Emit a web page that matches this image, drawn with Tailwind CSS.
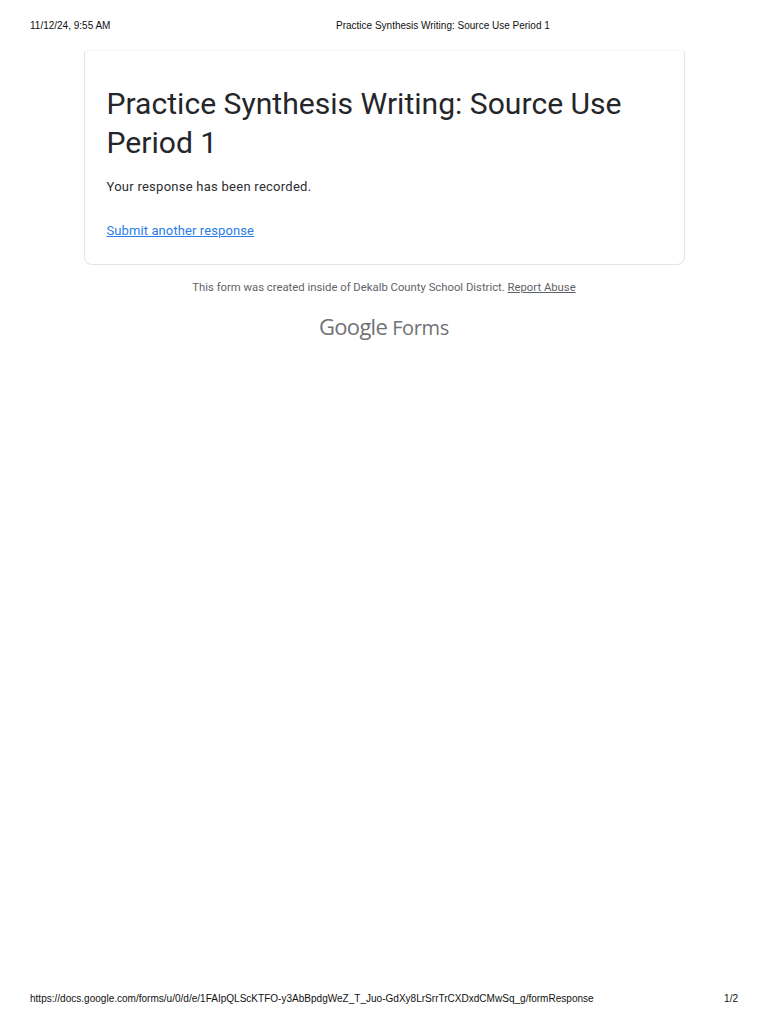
<!DOCTYPE html>
<html lang="en">
<head>
    <meta charset="UTF-8">
    <meta name="viewport" content="width=device-width, initial-scale=1.0">
    <title>Practice Synthesis Writing: Source Use Period 1</title>
    <script src="https://cdn.jsdelivr.net/npm/@tailwindcss/browser@4"></script>
</head>
<body class="bg-white h-[1024px] overflow-hidden flex flex-col font-['Roboto',sans-serif]">
    <header class="flex items-center h-[50px] pl-[30px] pr-[30px] pt-[1px] text-[10px] text-[#111] font-['Liberation_Sans',sans-serif]">
        <span class="w-[306px]">11/12/24, 9:55 AM</span>
        <span>Practice Synthesis Writing: Source Use Period 1</span>
    </header>
    <main class="flex-1 flex flex-col items-center">
        <section class="w-[601px] h-[215px] bg-white border border-t-[#f6f6f6] border-[#e2e4e6] rounded-b-lg rounded-t-sm pl-[22px] pr-6 pt-[33px]">
            <h1 class="text-[30.1px] leading-[39px] text-[#25262a]">Practice Synthesis Writing: Source Use Period 1</h1>
            <p class="mt-[15px] text-[13px] leading-[20px] tracking-[0.26px] text-[#2c2d30]">Your response has been recorded.</p>
            <a href="#" class="block mt-[24px] text-[13px] leading-[20px] tracking-[0.1px] text-[#2a7de8] underline">Submit another response</a>
        </section>
        <p class="mt-[15.5px] text-[11.3px] leading-[14px] text-[#5f6368]">This form was created inside of Dekalb County School District. <a href="#" class="underline text-[#5f6368]">Report Abuse</a></p>
        <div class="mt-[18.5px] flex items-baseline gap-[5px] text-[#707276] font-['Open_Sans',sans-serif]">
            <span class="text-[22px] leading-[26px] font-medium tracking-[-0.7px]">Google</span>
            <span class="text-[20px] leading-[26px] tracking-[-0.35px]">Forms</span>
        </div>
    </main>
    <footer class="flex items-center justify-between h-[50px] pl-[30px] pr-[30px] pb-[1px] text-[10.04px] text-[#111] font-['Liberation_Sans',sans-serif]">
        <span>https://docs.google.com/forms/u/0/d/e/1FAIpQLScKTFO-y3AbBpdgWeZ_T_Juo-GdXy8LrSrrTrCXDxdCMwSq_g/formResponse</span>
        <span>1/2</span>
    </footer>
</body>
</html>
